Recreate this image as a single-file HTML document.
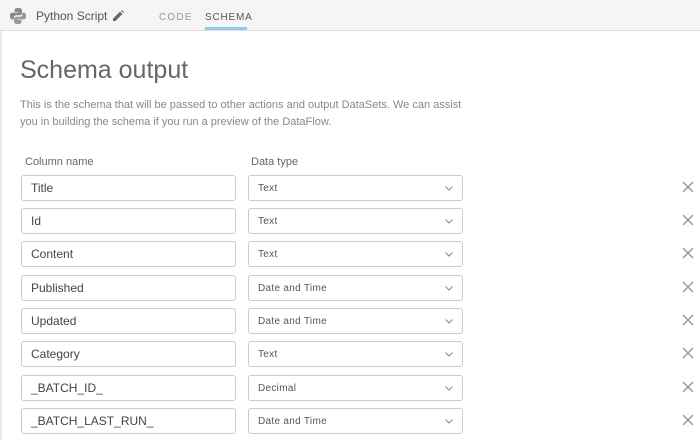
<!DOCTYPE html>
<html><head><style>
*{box-sizing:border-box;margin:0;padding:0}
body{width:700px;height:440px;overflow:hidden;background:#fff;font-family:"Liberation Sans",sans-serif;position:relative}
.hdr{position:absolute;left:0;top:0;width:700px;height:31px;background:#f5f5f5;border-bottom:1px solid #ddd}
.lb{position:absolute;left:0;top:31px;width:2px;height:409px;background:#e8e8e8}
.t{position:absolute;white-space:nowrap}
.in{position:absolute;width:215px;height:26px;border:1px solid #ccc;border-radius:3px;font-size:12px;color:#444;padding:5px 0 0 9px}
.sel{position:absolute;left:248px;width:215px;height:26px;border:1px solid #ccc;border-radius:3px;font-size:10px;color:#555;padding:7px 0 0 9px;letter-spacing:.3px}
.sel svg{position:absolute;right:9px;top:10px}
.x{position:absolute;left:682px}
</style></head><body>
<div class="hdr"></div>
<svg class="t" style="left:10px;top:8px" width="16" height="16" viewBox="0 0 14 14"><path d="M7 0C4 0 4 1.3 4 2v1.5h3.2V4H2C.7 4 0 5 0 7s.7 3 2 3h1.3V8.3c0-1.2.9-2 2-2h3.4c1 0 1.8-.8 1.8-1.8V2c0-1-.9-2-3.5-2z" fill="#888"/><path d="M7 14c3 0 3-1.3 3-2v-1.5H6.8V10H12c1.3 0 2-1 2-3s-.7-3-2-3h-1.3v1.7c0 1.2-.9 2-2 2H5.3c-1 0-1.8.8-1.8 1.8V12c0 1 .9 2 3.5 2z" fill="#999"/></svg>
<div class="t" style="left:36px;top:9px;font-size:12px;color:#555">Python Script</div>
<svg class="t" style="left:113px;top:10px" width="11" height="11" viewBox="0 0 11 11"><path d="M0 11V8.6L7 1.6 9.4 4 2.4 11z M8 .6l1-0.6 2 2-.6 1z" fill="#666"/></svg>
<div class="t" style="left:159px;top:12px;font-size:10px;color:#999;letter-spacing:1.2px">CODE</div>
<div class="t" style="left:205px;top:12px;font-size:10px;color:#555;letter-spacing:.8px">SCHEMA</div>
<div class="t" style="left:205px;top:27px;width:42px;height:3px;background:#8ccbee"></div>
<div class="lb"></div>
<div class="t" style="left:20px;top:56px;font-size:25px;color:#666">Schema output</div>
<div class="t" style="left:20px;top:97px;font-size:11px;color:#888;line-height:17px">This is the schema that will be passed to other actions and output DataSets. We can assist<br>you in building the schema if you run a preview of the DataFlow.</div>
<div class="t" style="left:25px;top:156px;font-size:11px;color:#666">Column name</div>
<div class="t" style="left:251px;top:156px;font-size:11px;color:#666">Data type</div>

<div class="in" style="left:21px;top:175px">Title</div><div class="sel" style="top:175px">Text<svg width="8" height="5"><path d="M.5.5l3.5 3.5 3.5-3.5" stroke="#888" fill="none"/></svg></div>
<div class="in" style="left:21px;top:208px">Id</div><div class="sel" style="top:208px">Text<svg width="8" height="5"><path d="M.5.5l3.5 3.5 3.5-3.5" stroke="#888" fill="none"/></svg></div>
<div class="in" style="left:21px;top:241px">Content</div><div class="sel" style="top:241px">Text<svg width="8" height="5"><path d="M.5.5l3.5 3.5 3.5-3.5" stroke="#888" fill="none"/></svg></div>
<div class="in" style="left:21px;top:275px">Published</div><div class="sel" style="top:275px">Date and Time<svg width="8" height="5"><path d="M.5.5l3.5 3.5 3.5-3.5" stroke="#888" fill="none"/></svg></div>
<div class="in" style="left:21px;top:308px">Updated</div><div class="sel" style="top:308px">Date and Time<svg width="8" height="5"><path d="M.5.5l3.5 3.5 3.5-3.5" stroke="#888" fill="none"/></svg></div>
<div class="in" style="left:21px;top:341px">Category</div><div class="sel" style="top:341px">Text<svg width="8" height="5"><path d="M.5.5l3.5 3.5 3.5-3.5" stroke="#888" fill="none"/></svg></div>
<div class="in" style="left:21px;top:375px">_BATCH_ID_</div><div class="sel" style="top:375px">Decimal<svg width="8" height="5"><path d="M.5.5l3.5 3.5 3.5-3.5" stroke="#888" fill="none"/></svg></div>
<div class="in" style="left:21px;top:408px">_BATCH_LAST_RUN_</div><div class="sel" style="top:408px">Date and Time<svg width="8" height="5"><path d="M.5.5l3.5 3.5 3.5-3.5" stroke="#888" fill="none"/></svg></div>

<svg class="x" style="top:181px" width="12" height="12"><path d="M1 1l10 10M11 1L1 11" stroke="#999" stroke-width="1.5"/></svg>
<svg class="x" style="top:214px" width="12" height="12"><path d="M1 1l10 10M11 1L1 11" stroke="#999" stroke-width="1.5"/></svg>
<svg class="x" style="top:247px" width="12" height="12"><path d="M1 1l10 10M11 1L1 11" stroke="#999" stroke-width="1.5"/></svg>
<svg class="x" style="top:281px" width="12" height="12"><path d="M1 1l10 10M11 1L1 11" stroke="#999" stroke-width="1.5"/></svg>
<svg class="x" style="top:314px" width="12" height="12"><path d="M1 1l10 10M11 1L1 11" stroke="#999" stroke-width="1.5"/></svg>
<svg class="x" style="top:347px" width="12" height="12"><path d="M1 1l10 10M11 1L1 11" stroke="#999" stroke-width="1.5"/></svg>
<svg class="x" style="top:381px" width="12" height="12"><path d="M1 1l10 10M11 1L1 11" stroke="#999" stroke-width="1.5"/></svg>
<svg class="x" style="top:414px" width="12" height="12"><path d="M1 1l10 10M11 1L1 11" stroke="#999" stroke-width="1.5"/></svg>
</body></html>
